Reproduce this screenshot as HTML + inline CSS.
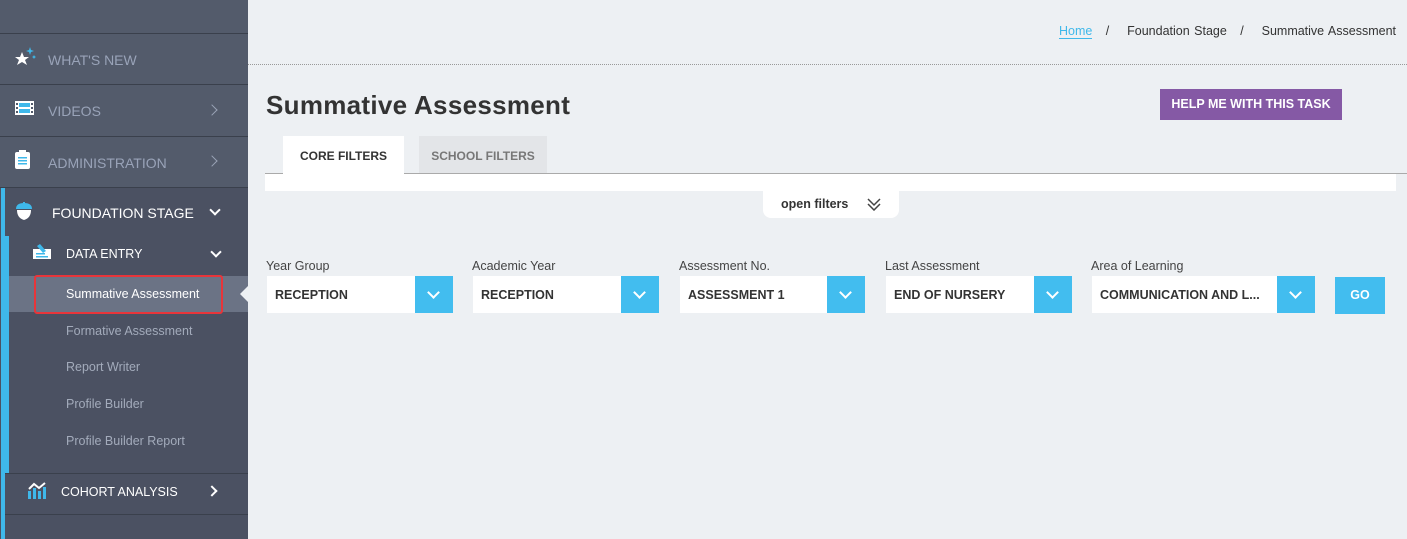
<!DOCTYPE html>
<html><head><style>
*{box-sizing:border-box;margin:0;padding:0}
body{width:1407px;height:539px;overflow:hidden;background:#edf0f3;font-family:"Liberation Sans",sans-serif;position:relative}
.a{position:absolute}
.sb{left:0;top:0;width:248px;height:539px;background:#4b5162}
.hl{height:1px;background:#3a404c}
.item{color:#99a3b8;font-size:14px}
.sub{color:#a3abbb;font-size:12.5px;left:66px}
.lbl{font-size:12.5px;color:#444;top:259px}
.sel{top:276px;height:37px;background:#fff}
.sel span{position:absolute;left:8px;top:12px;font-size:12.5px;font-weight:bold;color:#333}
.sel i{position:absolute;right:0;top:0;width:38px;height:37px;background:#42bdef}
.sel i:after{content:"";position:absolute;left:14px;top:12px;width:7px;height:7px;border-right:2.5px solid #fff;border-bottom:2.5px solid #fff;transform:rotate(45deg)}
.chev{width:8px;height:8px;border-right:1.6px solid #9aa3b6;border-top:1.6px solid #9aa3b6;transform:rotate(45deg)}
.chd{width:8px;height:8px;border-right:2px solid #fff;border-bottom:2px solid #fff;transform:rotate(45deg)}
</style></head><body>
<div class="a sb"></div>
<div class="a" style="left:0;top:0;width:248px;height:187px;background:#535b6b"></div>
<div class="a hl" style="left:0;top:33px;width:248px"></div>
<div class="a hl" style="left:0;top:84px;width:248px"></div>
<div class="a hl" style="left:0;top:136px;width:248px"></div>
<div class="a hl" style="left:0;top:187px;width:248px"></div>
<div class="a" style="left:1px;top:188px;width:4px;height:351px;background:#3fb8ea"></div>
<div class="a" style="left:1px;top:236px;width:8px;height:237px;background:#3fb8ea"></div>
<div class="a hl" style="left:5px;top:473px;width:243px"></div>
<div class="a hl" style="left:5px;top:514px;width:243px"></div>
<!-- icons -->
<svg class="a" style="left:14px;top:46px" width="22" height="22"><path d="M8 6 L10 11 L15 11 L11 14 L13 19 L8 16 L3 19 L5 14 L1 11 L6 11Z" fill="#fff"/><path d="M16 1 L17 4 L20 5 L17 6 L16 9 L15 6 L12 5 L15 4Z" fill="#3fb8ea"/><path d="M20 9 L20.7 10.3 L22 11 L20.7 11.7 L20 13 L19.3 11.7 L18 11 L19.3 10.3Z" fill="#3fb8ea"/></svg>
<svg class="a" style="left:15px;top:101px" width="19" height="14"><rect width="19" height="14" fill="#fff"/><rect x="4" y="2" width="11" height="4" fill="#3fb8ea"/><rect x="4" y="8" width="11" height="4" fill="#3fb8ea"/><g fill="#535b6b"><rect x="1" y="2" width="2" height="2"/><rect x="1" y="6" width="2" height="2"/><rect x="1" y="10" width="2" height="2"/><rect x="16" y="2" width="2" height="2"/><rect x="16" y="6" width="2" height="2"/><rect x="16" y="10" width="2" height="2"/></g></svg>
<svg class="a" style="left:15px;top:150px" width="15" height="19"><rect y="2" width="15" height="17" rx="2" fill="#fff"/><rect x="4" y="0" width="7" height="4" fill="#fff"/><g fill="#3fb8ea"><rect x="3" y="7" width="9" height="1.5"/><rect x="3" y="10" width="9" height="1.5"/><rect x="3" y="13" width="9" height="1.5"/></g></svg>
<svg class="a" style="left:15px;top:202px" width="18" height="18"><path d="M1 7 Q1 1 9 1 Q17 1 17 7Z" fill="#3fb8ea"/><rect x="8" y="0" width="2" height="3" fill="#3fb8ea"/><path d="M2 8 H16 Q16 16 9 18 Q2 16 2 8Z" fill="#fff"/></svg>
<svg class="a" style="left:32px;top:244px" width="20" height="15"><rect x="1" y="5" width="18" height="10" fill="#fff"/><rect x="4" y="9" width="9" height="1.5" fill="#3fb8ea"/><rect x="4" y="12" width="12" height="1.5" fill="#3fb8ea"/><path d="M5 2 L8 0 L14 7 L11 9Z" fill="#3fb8ea"/></svg>
<svg class="a" style="left:28px;top:482px" width="19" height="17"><g fill="#3fb8ea"><rect x="0" y="9" width="3" height="8"/><rect x="5" y="6" width="3" height="11"/><rect x="10" y="9" width="3" height="8"/><rect x="15" y="5" width="3" height="12"/></g><path d="M1 7 L6 2 L11 6 L17 1" stroke="#fff" stroke-width="2" fill="none"/></svg>
<div class="a item" style="left:48px;top:52px">WHAT'S NEW</div>
<div class="a item" style="left:48px;top:103px">VIDEOS</div>
<div class="a item" style="left:48px;top:155px">ADMINISTRATION</div>
<div class="a chev" style="left:208px;top:106px"></div>
<div class="a chev" style="left:208px;top:157px"></div>
<div class="a" style="left:52px;top:205px;color:#fff;font-size:14px">FOUNDATION STAGE</div>
<div class="a chd" style="left:211px;top:206px"></div>
<div class="a" style="left:66px;top:247px;color:#fff;font-size:12.5px">DATA ENTRY</div>
<div class="a chd" style="left:212px;top:248px"></div>
<div class="a" style="left:9px;top:276px;width:239px;height:36px;background:#6b7385"></div>
<div class="a" style="left:34px;top:275px;width:189px;height:39px;border:2.5px solid #e8353a;border-radius:3px"></div>
<div class="a" style="left:66px;top:287px;color:#fff;font-size:12.5px">Summative Assessment</div>
<div class="a" style="left:240px;top:286px;width:0;height:0;border-top:8px solid transparent;border-bottom:8px solid transparent;border-right:8px solid #edf0f3"></div>
<div class="a sub" style="top:324px">Formative Assessment</div>
<div class="a sub" style="top:360px">Report Writer</div>
<div class="a sub" style="top:397px">Profile Builder</div>
<div class="a sub" style="top:434px">Profile Builder Report</div>
<div class="a" style="left:61px;top:485px;color:#fff;font-size:12.5px">COHORT ANALYSIS</div>
<div class="a chd" style="left:208px;top:487px;transform:rotate(-45deg)"></div>
<!-- main -->
<div class="a" style="right:11px;top:24px;font-size:12.5px;color:#333;white-space:nowrap;word-spacing:1px"><span style="color:#3fb8ea;border-bottom:1px solid #3fb8ea">Home</span>&nbsp;&nbsp; / &nbsp;&nbsp; Foundation Stage &nbsp;&nbsp;/ &nbsp;&nbsp; Summative Assessment</div>
<div class="a" style="left:248px;top:64px;width:1159px;border-top:1px dotted #999"></div>
<div class="a" style="left:266px;top:90px;font-size:26px;font-weight:bold;color:#333;letter-spacing:0.3px">Summative Assessment</div>
<div class="a" style="left:1160px;top:89px;width:182px;height:31px;background:#8559a5;color:#fff;font-size:12.5px;font-weight:bold;text-align:center;line-height:31px">HELP ME WITH THIS TASK</div>
<div class="a" style="left:265px;top:173px;width:1142px;height:1px;background:#aaa"></div>
<div class="a" style="left:283px;top:136px;width:121px;height:38px;background:#fff;font-size:12px;font-weight:bold;color:#333;text-align:center;line-height:40px">CORE FILTERS</div>
<div class="a" style="left:419px;top:136px;width:128px;height:37px;background:#e3e5e8;font-size:12px;font-weight:bold;color:#777;text-align:center;line-height:40px">SCHOOL FILTERS</div>
<div class="a" style="left:265px;top:174px;width:1131px;height:17px;background:#fff"></div>
<div class="a" style="left:763px;top:190px;width:136px;height:28px;background:#fff;border-radius:0 0 8px 8px;font-size:12.5px;font-weight:bold;color:#333;padding:7px 0 0 18px">open filters</div>
<svg class="a" style="left:866px;top:197px" width="16" height="14"><path d="M2 2 L8 8 L14 2 M2 7 L8 13 L14 7" stroke="#444" stroke-width="1.5" fill="none"/></svg>
<div class="a lbl" style="left:266px">Year Group</div>
<div class="a lbl" style="left:472px">Academic Year</div>
<div class="a lbl" style="left:679px">Assessment No.</div>
<div class="a lbl" style="left:885px">Last Assessment</div>
<div class="a lbl" style="left:1091px">Area of Learning</div>
<div class="a sel" style="left:267px;width:186px"><span>RECEPTION</span><i></i></div>
<div class="a sel" style="left:473px;width:186px"><span>RECEPTION</span><i></i></div>
<div class="a sel" style="left:680px;width:185px"><span>ASSESSMENT 1</span><i></i></div>
<div class="a sel" style="left:886px;width:186px"><span>END OF NURSERY</span><i></i></div>
<div class="a sel" style="left:1092px;width:223px"><span>COMMUNICATION AND L...</span><i></i></div>
<div class="a" style="left:1335px;top:277px;width:50px;height:37px;background:#42bdef;color:#fff;font-size:12.5px;font-weight:bold;text-align:center;line-height:37px">GO</div>
</body></html>
